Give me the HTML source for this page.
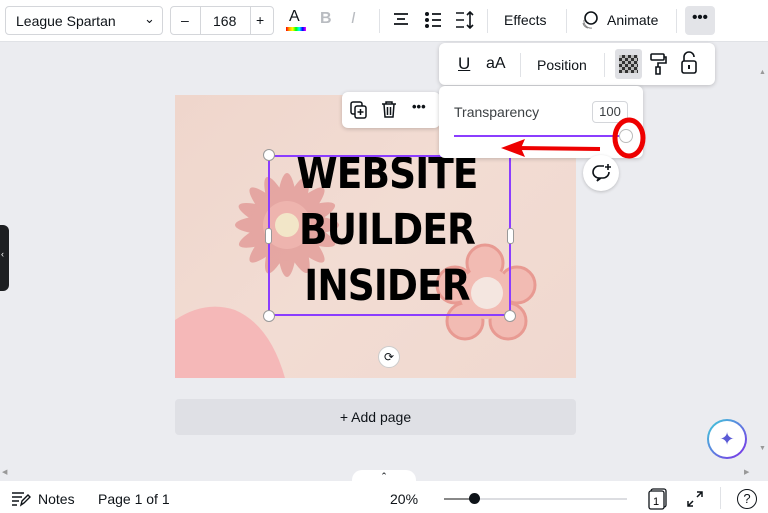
<!DOCTYPE html>
<html><head><meta charset="utf-8"><style>
*{box-sizing:border-box;margin:0;padding:0}
body{width:768px;height:513px;overflow:hidden;background:#ebecf0;font-family:"Liberation Sans",sans-serif;position:relative;color:#0e1318}
.abs{position:absolute}
.top{left:0;top:0;width:768px;height:42px;background:#fff;border-bottom:1px solid #e0e2e6}
.box{border:1px solid #d4d6da;border-radius:4px;background:#fff}
.t{font-size:14px;color:#0e1318}
.menu{background:#fff;border-radius:6px;box-shadow:0 1px 4px rgba(0,0,0,.2)}
.handle{width:12px;height:12px;border-radius:50%;background:#fff;border:1px solid #999}
</style></head><body>
<div class="abs top">
  <div class="abs box" style="left:5px;top:6px;width:158px;height:29px"><span class="abs t" style="left:10px;top:6px">League Spartan</span><span class="abs" style="left:138px;top:4px;font-size:13px">⌄</span></div>
  <div class="abs box" style="left:170px;top:6px;width:104px;height:29px">
    <span class="abs t" style="left:10px;top:5px">–</span>
    <div class="abs" style="left:29px;top:0;width:1px;height:27px;background:#d4d6da"></div>
    <span class="abs t" style="left:42px;top:6px">168</span>
    <div class="abs" style="left:79px;top:0;width:1px;height:27px;background:#d4d6da"></div>
    <span class="abs t" style="left:85px;top:5px">+</span>
  </div>
  <span class="abs" style="left:289px;top:8px;font-size:16px">A</span>
  <div class="abs" style="left:286px;top:27px;width:20px;height:4px;background:linear-gradient(90deg,red,orange,yellow,lime,cyan,blue,magenta)"></div>
  <span class="abs" style="left:320px;top:10px;font-size:16px;font-weight:bold;color:#b9bcc1">B</span>
  <span class="abs" style="left:351px;top:10px;font-size:16px;font-style:italic;color:#b9bcc1">I</span>
  <div class="abs" style="left:379px;top:9px;width:1px;height:24px;background:#e0e2e6"></div>
  <svg class="abs" style="left:392px;top:12px" width="18" height="16"><path d="M2 2h14M5 7h8M2 12h14" stroke="#0e1318" stroke-width="1.8"/></svg>
  <svg class="abs" style="left:424px;top:11px" width="18" height="18"><g fill="#0e1318"><circle cx="3" cy="3" r="2"/><circle cx="3" cy="9" r="2"/><circle cx="3" cy="15" r="2"/></g><path d="M8 3h9M8 9h9M8 15h9" stroke="#0e1318" stroke-width="1.8"/></svg>
  <svg class="abs" style="left:455px;top:11px" width="20" height="18"><path d="M1 2h8M1 9h8M1 16h8M15 1v16M12 4l3-3 3 3M12 14l3 3 3-3" stroke="#0e1318" stroke-width="1.6" fill="none"/></svg>
  <div class="abs" style="left:487px;top:9px;width:1px;height:24px;background:#e0e2e6"></div>
  <span class="abs t" style="left:504px;top:12px">Effects</span>
  <div class="abs" style="left:566px;top:9px;width:1px;height:24px;background:#e0e2e6"></div>
  <svg class="abs" style="left:580px;top:10px" width="20" height="20"><circle cx="11" cy="8" r="6" fill="none" stroke="#0e1318" stroke-width="1.6"/><path d="M4 10a7 7 0 0 0 8 8M3 13a6 6 0 0 0 5 5" stroke="#888" fill="none"/></svg>
  <span class="abs t" style="left:607px;top:12px">Animate</span>
  <div class="abs" style="left:676px;top:9px;width:1px;height:24px;background:#e0e2e6"></div>
  <div class="abs" style="left:685px;top:6px;width:30px;height:29px;background:#e3e4e8;border-radius:4px;text-align:center;font-size:15px;line-height:24px;font-weight:bold">•••</div>
</div>
<div class="abs" style="left:756px;top:43px;width:12px;height:422px;background:#ebecf0"><span class="abs" style="left:3px;top:26px;font-size:7px;color:#999">▲</span><span class="abs" style="left:3px;top:402px;font-size:7px;color:#999">▼</span></div>
<div class="abs" style="left:0;top:225px;width:9px;height:66px;background:#1d1f22;border-radius:0 6px 6px 0"><span class="abs" style="left:1px;top:24px;color:#fff;font-size:9px">‹</span></div>
<div class="abs" style="left:175px;top:95px;width:401px;height:283px;background:linear-gradient(135deg,#efd6cc,#f2dcd3 50%,#f0d8cf);overflow:hidden">
  <svg width="401" height="283" style="position:absolute;left:0;top:0">
    <g fill="#e39e9a" opacity=".85" transform="translate(112,130)">
      <ellipse rx="11" ry="52"/><ellipse rx="11" ry="52" transform="rotate(22)"/><ellipse rx="11" ry="52" transform="rotate(45)"/><ellipse rx="11" ry="52" transform="rotate(67)"/><ellipse rx="11" ry="52" transform="rotate(90)"/><ellipse rx="11" ry="52" transform="rotate(112)"/><ellipse rx="11" ry="52" transform="rotate(135)"/><ellipse rx="11" ry="52" transform="rotate(157)"/>
      <circle r="36"/>
    </g>
    <circle cx="112" cy="130" r="24" fill="#eeb4ae"/><circle cx="112" cy="130" r="12" fill="#f2e6c8"/>
    <g fill="#f2bbb3" stroke="#e89a92" stroke-width="3">
      <circle cx="310" cy="168" r="18"/><circle cx="342" cy="190" r="18"/><circle cx="333" cy="226" r="18"/><circle cx="290" cy="226" r="18"/><circle cx="280" cy="190" r="18"/>
    </g>
    <circle cx="311" cy="198" r="26" fill="#f2bbb3"/>
    <circle cx="312" cy="198" r="16" fill="#f4e6e0"/>
    <path d="M0 283 L0 225 Q30 205 60 215 Q95 230 110 283Z" fill="#f5b8b8"/>
    <path d="M375 45 l-12 12 l14 -4z" fill="#f0b8b0"/>
  </svg>
  <div style="position:absolute;left:80px;top:51px;width:264px;text-align:center;font-family:'DejaVu Sans',sans-serif;font-weight:bold;font-size:43px;line-height:56px;color:#000;letter-spacing:-1px;transform:scaleX(.87)">WEBSITE<br>BUILDER<br>INSIDER</div>
</div>
<div class="abs" style="left:268px;top:155px;width:243px;height:161px;border:2px solid #8b3dff"></div>
<div class="abs handle" style="left:263px;top:149px"></div>
<div class="abs handle" style="left:263px;top:310px"></div>
<div class="abs handle" style="left:504px;top:310px"></div>
<div class="abs" style="left:265px;top:228px;width:7px;height:16px;background:#fff;border:1px solid #999;border-radius:3px"></div>
<div class="abs" style="left:507px;top:228px;width:7px;height:16px;background:#fff;border:1px solid #999;border-radius:3px"></div>
<div class="abs" style="left:378px;top:346px;width:22px;height:22px;border-radius:50%;background:#fff;border:1px solid #ccc;text-align:center;font-size:12px;line-height:20px">⟳</div>
<div class="abs menu" style="left:342px;top:92px;width:98px;height:36px">
  <svg class="abs" style="left:8px;top:9px" width="18" height="18"><rect x="1" y="1" width="11" height="12" rx="2" fill="none" stroke="#0e1318" stroke-width="1.5"/><rect x="5" y="5" width="11" height="12" rx="2" fill="#fff" stroke="#0e1318" stroke-width="1.5"/><path d="M10.5 8v6M7.5 11h6" stroke="#0e1318" stroke-width="1.5"/></svg>
  <svg class="abs" style="left:39px;top:8px" width="16" height="19"><path d="M1 4h14M5 4V2h6v2M3 4l1 13h8l1-13M6.5 7v8M9.5 7v8" stroke="#0e1318" stroke-width="1.5" fill="none"/></svg>
  <span class="abs" style="left:70px;top:7px;font-size:13px;font-weight:bold">•••</span>
</div>
<div class="abs menu" style="left:439px;top:43px;width:276px;height:42px">
  <span class="abs" style="left:19px;top:11px;font-size:17px;text-decoration:underline">U</span>
  <span class="abs" style="left:47px;top:12px;font-size:16px">aA</span>
  <div class="abs" style="left:81px;top:10px;width:1px;height:24px;background:#e0e2e6"></div>
  <span class="abs t" style="left:98px;top:14px">Position</span>
  <div class="abs" style="left:165px;top:10px;width:1px;height:24px;background:#e0e2e6"></div>
  <div class="abs" style="left:176px;top:6px;width:27px;height:30px;background:#dfe0e4;border-radius:3px"></div>
  <div class="abs" style="left:180px;top:12px;width:19px;height:18px;background:repeating-conic-gradient(#333 0 25%,#bbb 0 50%) 0 0/6px 6px"></div>
  <svg class="abs" style="left:210px;top:9px" width="18" height="24"><rect x="2" y="2" width="13" height="6" rx="1" fill="none" stroke="#0e1318" stroke-width="1.6"/><path d="M15 5h2v6H9v4M7 15h4v7H7z" stroke="#0e1318" stroke-width="1.6" fill="none"/></svg>
  <svg class="abs" style="left:241px;top:8px" width="18" height="24"><path d="M4 10V6a5 5 0 0 1 10 0" stroke="#0e1318" stroke-width="1.6" fill="none"/><rect x="2" y="10" width="14" height="12" rx="2" fill="none" stroke="#0e1318" stroke-width="1.6"/><path d="M9 14v4" stroke="#0e1318" stroke-width="2"/></svg>
</div>
<div class="abs menu" style="left:439px;top:86px;width:204px;height:72px">
  <span class="abs" style="left:15px;top:18px;font-size:14px;color:#3c4043">Transparency</span>
  <div class="abs box" style="left:153px;top:15px;width:36px;height:22px;font-size:13px;text-align:center;line-height:20px;color:#3c4043">100</div>
  <div class="abs" style="left:15px;top:49px;width:175px;height:2px;background:#8b3dff"></div>
  <div class="abs" style="left:180px;top:43px;width:14px;height:14px;border-radius:50%;background:#fff;border:1px solid #bbb"></div>
</div>
<svg class="abs" style="left:495px;top:112px" width="160" height="50"><path d="M105 37 L22 36" stroke="#e00" stroke-width="4"/><path d="M6 36 L30 27 L26 36 L30 45Z" fill="#e00"/><ellipse cx="134" cy="26" rx="14" ry="18" fill="none" stroke="#e00" stroke-width="5"/></svg>
<div class="abs" style="left:583px;top:155px;width:36px;height:36px;border-radius:50%;background:#fff;box-shadow:0 1px 3px rgba(0,0,0,.2)"><svg class="abs" style="left:8px;top:8px" width="22" height="20"><path d="M13 3H8a6 6 0 0 0 0 12l-2 3 4-3h2a6 6 0 0 0 6-6" stroke="#0e1318" stroke-width="1.6" fill="none"/><path d="M17 1v6M14 4h6" stroke="#0e1318" stroke-width="1.6"/></svg></div>
<div class="abs" style="left:175px;top:399px;width:401px;height:36px;background:#dfe0e5;border-radius:4px;text-align:center;line-height:36px;font-size:14px">+ Add page</div>
<div class="abs" style="left:707px;top:419px;width:40px;height:40px;border-radius:50%;background:linear-gradient(135deg,#3ed1d8,#7d2ae8);"><div class="abs" style="left:2px;top:2px;width:36px;height:36px;border-radius:50%;background:#fff;text-align:center;line-height:36px;color:#5b5bd6;font-size:18px">✦</div></div>
<div class="abs" style="left:0;top:465px;width:768px;height:15px;background:#ebecf0"><span class="abs" style="left:2px;top:3px;font-size:7px;color:#999">◀</span><span class="abs" style="left:744px;top:3px;font-size:7px;color:#999">▶</span></div>
<div class="abs" style="left:352px;top:470px;width:64px;height:14px;background:#fff;border-radius:10px 10px 0 0;text-align:center;font-size:9px;line-height:12px">⌃</div>
<div class="abs" style="left:0;top:481px;width:768px;height:32px;background:#fff">
  <svg class="abs" style="left:11px;top:10px" width="20" height="16"><path d="M1 2h12M1 6h10M1 10h7M1 14h5" stroke="#0e1318" stroke-width="1.5"/><path d="M10 14l1-4 6-6 2 2-6 6z" stroke="#0e1318" stroke-width="1.4" fill="none"/></svg>
  <span class="abs t" style="left:38px;top:10px">Notes</span>
  <span class="abs t" style="left:98px;top:10px">Page 1 of 1</span>
  <span class="abs t" style="left:390px;top:10px">20%</span>
  <div class="abs" style="left:444px;top:17px;width:183px;height:2px;background:#dcdde1"></div>
  <div class="abs" style="left:444px;top:17px;width:30px;height:2px;background:#888"></div>
  <div class="abs" style="left:469px;top:12px;width:11px;height:11px;border-radius:50%;background:#0e1318"></div>
  <svg class="abs" style="left:646px;top:6px" width="24" height="24"><rect x="5" y="2" width="15" height="18" rx="2" fill="none" stroke="#0e1318" stroke-width="1.3"/><rect x="3" y="4" width="15" height="18" rx="2" fill="#fff" stroke="#0e1318" stroke-width="1.3"/><text x="7" y="18" font-size="11" font-family="Liberation Sans">1</text></svg>
  <svg class="abs" style="left:686px;top:9px" width="18" height="18"><path d="M11 2h5v5M16 2l-5 5M7 16H2v-5M2 16l5-5" stroke="#0e1318" stroke-width="1.5" fill="none"/></svg>
  <div class="abs" style="left:720px;top:6px;width:1px;height:22px;background:#e0e2e6"></div>
  <div class="abs" style="left:737px;top:8px;width:20px;height:20px;border-radius:50%;border:1.5px solid #0e1318;text-align:center;font-size:13px;line-height:17px">?</div>
</div>
</body></html>
